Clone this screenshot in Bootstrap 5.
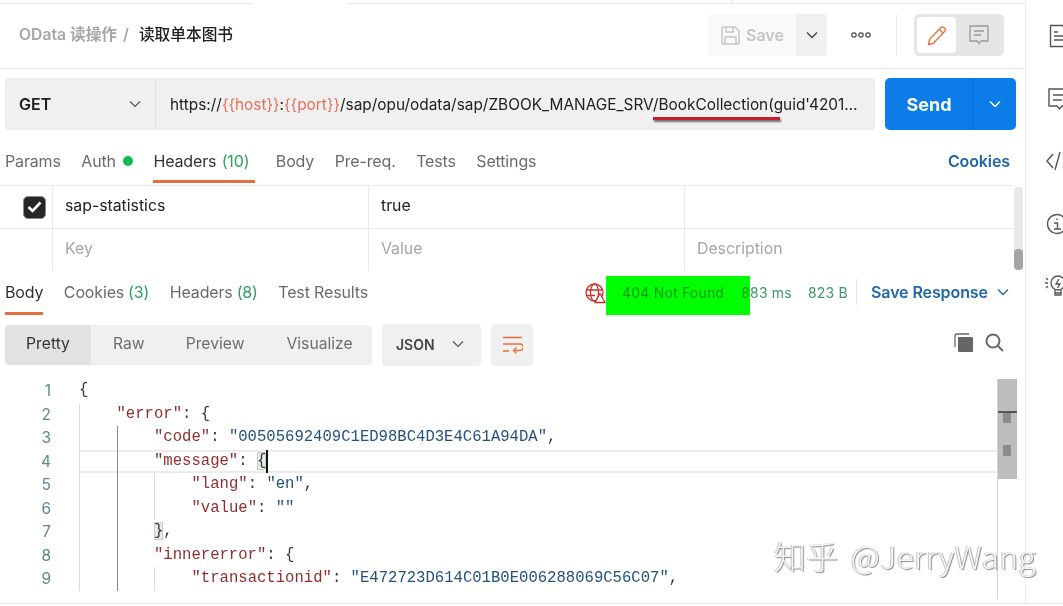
<!DOCTYPE html>
<html lang="zh"><head><meta charset="utf-8"><title>Postman</title>
<link href="https://cdn.jsdelivr.net/npm/bootstrap@5.3.0/dist/css/bootstrap.min.css" rel="stylesheet">
<style>
html,body{margin:0;height:606px;overflow:hidden;background:#fff}
body{font-family:Inter,"Noto Sans CJK SC",sans-serif;font-size:16px;color:#212121;width:1063px}
.shell{height:604px;border-bottom:1px solid #e8e8e8}
.main-col{width:1026px;border-right:1px solid #ececec;height:100%;position:relative}
.side-col{width:37px;overflow:hidden;height:100%;padding-top:24px;padding-left:19px}
.side-col svg{display:block;flex:none;margin-bottom:38.500px;width:24px;height:24px;color:#555}
.strip{height:4px}
.strip>div{border-bottom:1px solid #e6e6e6}
.strip .s1{width:252px}.strip .s2{width:96px;border-bottom-color:transparent}.strip .s3{width:384px;border-right:1px solid #e6e6e6}.strip .s4{flex:1}
.topbar{height:65px;border-bottom:1px solid #e8e8e8;padding:0 21px 2px 19px}
.crumb{font-size:15.700px;font-weight:600;color:#a6a6a6}
.crumb b{font-weight:500;color:#212121}
.crumb i{font-style:normal;margin:0 6px 0 2px}
.savebtn{width:87px;height:42px;background:#f9f9f9;border-radius:4px 0 0 4px;color:#c4c4c4;font-weight:600;padding-left:12px;gap:5px}
.savecaret{width:31px;height:42px;margin-left:1px;background:#f0f0f0;border-radius:0 4px 4px 0;color:#444}
.dots{width:69px;height:42px;color:#444;padding-right:2px}
.vline{width:1px;height:42px;background:#ededed}
.toggle{width:90px;height:42px;margin-left:17px;background:#e6e6e6;border-radius:5px;padding:3px}
.toggle>span{width:40px;height:36px;background:#fff;border-radius:4px;color:#e5703f}
.toggle>em{width:46px;color:#999}
.reqrow{height:52px;margin:9px 9px 0 5px;gap:10px}
.urlbox{width:870px;background:#f0f0f0;border-radius:4px;position:relative;border:1px solid #ececec}
.method{width:150px;border-right:1px solid #e2e2e2;padding:0 14px 0 13px;font-weight:600;color:#212121}
.urltext{padding:1px 14px 0;flex:1;min-width:0;font-size:15.400px;white-space:nowrap;overflow:hidden}
.urltext span{color:#e5705a}
.mark-red{position:absolute;left:647px;top:38px;width:127px;height:3px;background:#c81e2c;box-shadow:1px 2px 2px rgba(0,0,0,.55)}
.sendbtn{width:131px;background:#0b7ce8;border-radius:5px;color:#fff;font-size:18px;font-weight:700}
.sendbtn>div:first-child{width:88px}
.sendbtn>div:last-child{flex:1;height:100%;border-left:1px solid #0a6fd0}
.tabset{padding:0 15px 0 5px;height:43px;margin-top:10px;color:#6b6b6b;font-size:16px;letter-spacing:-.15px;gap:20.500px}
.tabset>span{height:100%;display:flex;align-items:center;padding-top:2px;border-bottom:3px solid transparent;gap:7px}
.tabset>span.on{border-bottom-color:#e5703f;color:#333}
.reqtab-h{padding-right:6px}
.num{color:#2f9e5f}
.reqtab-h .num{margin-left:-6px}
.dotg{width:10px;height:10px;border-radius:50%;background:#0cbb52;display:inline-block}
.linkb{color:#1f67a8;font-weight:600;letter-spacing:-.1px}
.kvtable{margin:2px 12px 0 0;position:relative}
.kvrow{height:43px;border-top:1px solid #e8e8e8;font-size:15.800px}
.kvrow>.c1,.kvrow>.c2,.kvrow>.c3{padding-bottom:2px}
.kvrow:last-child{border-bottom:1px solid #e8e8e8;height:44px}
.kvrow:last-child>.c1,.kvrow:last-child>.c2,.kvrow:last-child>.c3{padding-bottom:6px}
.c0{width:53px;border-right:1px solid #e8e8e8;padding-right:6px}
.c1{width:316px;border-right:1px solid #e8e8e8;padding-left:12px}
.c2{width:316px;border-right:1px solid #e8e8e8;padding-left:12px}
.c3{flex:1;padding-left:12px}
.muted-k{color:#a6a6a6}
.chk{width:23px;height:23px;background:#262626;border-radius:5px;border:1px solid #888}
.kvscroll{position:absolute;right:-10px;top:2px;width:9px;height:83px;background:#e8e8e8;border-radius:4px}
.kvscroll>div{position:absolute;left:0;bottom:0;width:9px;height:21px;background:#a5a5a5;border-radius:4px}
.reshead{height:44px;padding:0 15px 0 5px;position:relative}
.reshead .tabset{margin:0;padding:0;height:100%}
.reshead .tabset>span{gap:4px;padding-top:1px}
.globe{flex:none}
.stat{font-size:14px;color:#3d9a66;letter-spacing:.2px;width:251px;padding-left:16px;padding-bottom:2px;flex:none}
.stat .s404{margin-right:17px}
.stat .sms{margin-right:16px}
.stat .vline{height:26px;background:#e6e6e6}
.savelink{margin-left:14px;gap:9px;width:139px;flex:none;padding-bottom:2px}
.savelink>span{white-space:nowrap}
.green-cover{position:absolute;left:606px;top:5px;width:144px;height:39px;background:#0f0;mix-blend-mode:multiply}
.tools{height:42px;margin-top:9px;padding:0 21px 0 5px}
.seg{width:367px;height:40px;background:#f0f0f0;border-radius:4px;color:#6e6e6e;overflow:hidden;font-size:15.700px}
.seg>span{display:flex;align-items:center;height:100%;padding-bottom:2px}
.seg .pick{width:86px;background:#e2e2e2;color:#333;justify-content:center}
.pad-raw{margin-left:22px}.pad-prev{margin-left:41px}.pad-vis{margin-left:42px}
.jsonsel{width:99px;height:42px;margin-left:10px;background:#f0f0f0;border-radius:4px;font-size:14px;font-weight:600;color:#444;padding:0 17px 2px 14px}
.wrapb{width:42px;height:42px;margin-left:10px;background:#f0f0f0;border-radius:4px;color:#e5703f}
.resp-icons{gap:12px;margin-bottom:6px}
.editor{margin-top:13px;height:220px;padding-right:9px}
.gutter{width:79px;flex:none;padding-right:28px;text-align:right;color:#5f8a90}
.gutter div,.cl{height:23.500px;line-height:23.500px;font-family:"Liberation Mono",monospace;font-size:15.600px}
.gutter div{font-family:Inter,sans-serif;font-size:15.500px}
.code{flex:1;min-width:0;overflow:hidden}
.cl{display:flex;white-space:pre;color:#3a3a3a}
.cl.act{box-shadow:inset 0 2px 0 #ececec,inset 0 -2px 0 #ececec}
.g{width:37.500px;flex:none;border-left:1px solid #dcdcdc}
.g.dk{border-left-color:#8a8a8a}
.k{color:#8f2f2f}.s{color:#24527f}
.br{background:#e6ece6;box-shadow:inset 0 0 0 1px #c6cfc6}
.caret{display:inline-block;width:2px;height:23px;background:#111;vertical-align:top}
.ruler{width:19px;flex:none;border-left:1px solid #d4d4d4;position:relative}
.thumb{position:absolute;left:0;top:0;width:19px;height:100px;background:#bdbdbd}
.thumb i{position:absolute;display:block}
.tline{left:0;top:32px;width:19px;height:2px;background:#555}
.tm1{left:5px;top:34px;width:8px;height:10px;background:#8c8c8c}
.tm2{left:5px;top:66px;width:8px;height:11px;background:#8c8c8c}
.wm{position:absolute;left:774px;top:533px;font-size:32px;line-height:44px;font-family:"Noto Sans CJK SC","DejaVu Sans",sans-serif;font-weight:300;color:#f4f4f4;text-shadow:1px 1px 1px #8a8a8a,-1px 0 0 #c8c8c8;white-space:nowrap;letter-spacing:.2px;word-spacing:5px}
.ml4{margin-left:4px}.ml3{margin-left:3px}.ml1{margin-left:1px}.ml2{margin-left:2px}
</style></head><body>
<div class="shell d-flex">
<div class="main-col">
 <div class="strip d-flex"><div class="s1"></div><div class="s2"></div><div class="s3"></div><div class="s4"></div></div>
 <div class="topbar d-flex align-items-center">
  <div class="crumb flex-grow-1">OData 读操作<i> / </i><b>读取单本图书</b></div>
  <div class="savebtn d-flex align-items-center"><svg width="21" height="21" viewBox="0 0 21 21" fill="none" stroke="#c4c4c4" stroke-width="1.4"><path d="M2 3a1 1 0 0 1 1-1h12l4 4v12a1 1 0 0 1-1 1H3a1 1 0 0 1-1-1z"/><path d="M6 2v5h7V2M5 19v-7h11v7"/></svg>Save</div>
  <div class="savecaret d-flex align-items-center justify-content-center"><svg width="12" height="8" viewBox="0 0 12 8" fill="none" stroke="currentColor" stroke-width="1.3"><path d="M1 1.500l5 5 5-5"/></svg></div>
  <div class="dots d-flex align-items-center justify-content-center"><svg width="20" height="6" viewBox="0 0 20 6" fill="none" stroke="currentColor" stroke-width="1.200"><circle cx="3" cy="3" r="2.200"/><circle cx="10" cy="3" r="2.200"/><circle cx="17" cy="3" r="2.200"/></svg></div>
  <div class="vline"></div>
  <div class="toggle d-flex align-items-center"><span class="d-flex align-items-center justify-content-center"><svg width="20" height="21" viewBox="0 0 20 21" fill="none" stroke="currentColor" stroke-width="1.300"><path d="M1.500 19.500l1-5L14 2.500a2 2 0 0 1 3 0l.8.8a2 2 0 0 1 0 3L6.300 18.300z"/><path d="M12.500 4.500l3.500 3.500"/></svg></span><em class="d-flex align-items-center justify-content-center"><svg width="20" height="20" viewBox="0 0 20 20" fill="none" stroke="currentColor" stroke-width="1.300"><path d="M1 1h18v15h-7l-2 2.500L8 16H1z"/><path d="M5 6h10M5 10h7"/></svg></em></div>
 </div>
 <div class="reqrow d-flex">
  <div class="urlbox d-flex align-items-center">
   <div class="method h-100 d-flex align-items-center justify-content-between"><span>GET</span><svg width="12" height="8" viewBox="0 0 12 8" fill="none" stroke="#555" stroke-width="1.200"><path d="M1 1.500l5 5 5-5"/></svg></div>
   <div class="urltext">https://<span>{{host}}</span>:<span>{{port}}</span>/sap/opu/odata/sap/ZBOOK_MANAGE_SRV/BookCollection(guid'4201…</div>
   <div class="mark-red"></div>
  </div>
  <div class="sendbtn d-flex align-items-center"><div class="text-center">Send</div><div class="d-flex align-items-center justify-content-center"><svg width="12" height="8" viewBox="0 0 12 8" fill="none" stroke="#fff" stroke-width="1.500"><path d="M1 1.500l5 5 5-5"/></svg></div></div>
 </div>
 <div class="tabset d-flex align-items-center">
  <span>Params</span><span>Auth<i class="dotg"></i></span><span class="on reqtab-h">Headers&nbsp;<em class="num fst-normal">(10)</em></span><span>Body</span><span>Pre-req.</span><span>Tests</span><span>Settings</span><span class="linkb ms-auto">Cookies</span>
 </div>
 <div class="kvtable">
  <div class="kvrow d-flex align-items-center"><div class="c0 h-100 d-flex align-items-center justify-content-end"><div class="chk d-flex align-items-center justify-content-center"><svg width="15" height="12" viewBox="0 0 15 12" fill="none" stroke="#fff" stroke-width="2.600"><path d="M1.500 6l4 4 8-8.500"/></svg></div></div><div class="c1 h-100 d-flex align-items-center">sap-statistics</div><div class="c2 h-100 d-flex align-items-center">true</div><div class="c3 h-100"></div></div>
  <div class="kvrow d-flex align-items-center muted-k"><div class="c0 h-100"></div><div class="c1 h-100 d-flex align-items-center">Key</div><div class="c2 h-100 d-flex align-items-center">Value</div><div class="c3 h-100 d-flex align-items-center">Description</div></div>
  <div class="kvscroll"><div></div></div>
 </div>
 <div class="reshead d-flex align-items-center">
  <div class="tabset d-flex align-items-center flex-grow-1"><span class="on">Body</span><span>Cookies<em class="num fst-normal">(3)</em></span><span>Headers<em class="num fst-normal">(8)</em></span><span>Test Results</span></div>
  <svg width="21" height="21" viewBox="0 0 21 21" fill="none" stroke="#c9302c" stroke-width="1.300" class="globe"><circle cx="9.500" cy="9.500" r="8.500"/><ellipse cx="9.500" cy="9.500" rx="4" ry="8.500"/><path d="M1 7h17M1 12.500h9"/><path d="M15 10.500l5 9h-10z" fill="#fff"/></svg>
  <div class="stat d-flex align-items-center"><span class="s404">404 Not Found</span><span class="sms">883 ms</span><span>823 B</span><span class="vline ms-auto"></span></div>
  <div class="linkb savelink d-flex align-items-center"><span>Save Response</span><svg width="12" height="8" viewBox="0 0 12 8" fill="none" stroke="#1f67a8" stroke-width="1.400"><path d="M1 1.500l5 5 5-5"/></svg></div>
  <div class="green-cover"></div>
 </div>
 <div class="tools d-flex align-items-center">
  <div class="seg d-flex"><span class="pick">Pretty</span><span class="pad-raw">Raw</span><span class="pad-prev">Preview</span><span class="pad-vis">Visualize</span></div>
  <div class="jsonsel d-flex align-items-center justify-content-between"><span>JSON</span><svg width="12" height="8" viewBox="0 0 12 8" fill="none" stroke="#555" stroke-width="1.200"><path d="M1 1.500l5 5 5-5"/></svg></div>
  <div class="wrapb d-flex align-items-center justify-content-center"><svg width="21" height="18" viewBox="0 0 21 18" fill="none" stroke="currentColor" stroke-width="1.300"><path d="M1 1.500h19M1 8h17a2.500 2.500 0 0 1 0 6.500h-6M14.500 11.500l-3 3 3 3M1 15h6"/></svg></div>
  <div class="ms-auto d-flex align-items-center resp-icons"><svg width="19" height="19" viewBox="0 0 19 19"><path d="M1 14V3a2 2 0 0 1 2-2h12" fill="none" stroke="#666" stroke-width="1.300"/><rect x="4" y="4" width="15" height="15" rx="1" fill="#666"/></svg><svg width="19" height="19" viewBox="0 0 19 19" fill="none" stroke="#666" stroke-width="2"><circle cx="8" cy="8" r="6.500"/><path d="M13 13l5 5"/></svg></div>
 </div>
 <div class="editor d-flex">
  <div class="gutter"><div>1</div><div>2</div><div>3</div><div>4</div><div>5</div><div>6</div><div>7</div><div>8</div><div>9</div></div>
  <div class="code">
   <div class="cl">{</div>
   <div class="cl"><i class="g"></i><span><span class="k">"error"</span>: {</span></div>
   <div class="cl"><i class="g"></i><i class="g dk"></i><span><span class="k">"code"</span>: <span class="s">"00505692409C1ED98BC4D3E4C61A94DA"</span>,</span></div>
   <div class="cl act"><i class="g"></i><i class="g dk"></i><span><span class="k">"message"</span>: <span class="br">{</span><span class="caret"></span></span></div>
   <div class="cl"><i class="g"></i><i class="g dk"></i><i class="g"></i><span><span class="k">"lang"</span>: <span class="s">"en"</span>,</span></div>
   <div class="cl"><i class="g"></i><i class="g dk"></i><i class="g"></i><span><span class="k">"value"</span>: <span class="s">""</span></span></div>
   <div class="cl"><i class="g"></i><i class="g dk"></i><span><span class="br">}</span>,</span></div>
   <div class="cl"><i class="g"></i><i class="g dk"></i><span><span class="k">"innererror"</span>: {</span></div>
   <div class="cl"><i class="g"></i><i class="g dk"></i><i class="g"></i><span><span class="k">"transactionid"</span>: <span class="s">"E472723D614C01B0E006288069C56C07"</span>,</span></div>
  </div>
  <div class="ruler"><div class="thumb"><i class="tline"></i><i class="tm1"></i><i class="tm2"></i></div></div>
 </div>
</div>
<div class="side-col d-flex flex-column">
 <svg class="ml4" viewBox="0 0 24 24" fill="none" stroke="currentColor" stroke-width="1.400"><path d="M1.500 1.500h12l6 6V22.500h-18z"/><path d="M5 8h4M5 12h10M5 16h10"/></svg>
 <svg class="ml3" viewBox="0 0 24 24" fill="none" stroke="currentColor" stroke-width="1.400"><path d="M1 2h22v17h-9l-2.500 3L9 19H1z"/><path d="M5 8h14M5 13h9"/></svg>
 <svg class="ml1" viewBox="0 0 24 24" fill="none" stroke="currentColor" stroke-width="1.400"><path d="M7 5l-6 7 6 7M14 3L9 21M17 5l6 7-6 7"/></svg>
 <svg class="ml2" viewBox="0 0 24 24" fill="none" stroke="currentColor" stroke-width="1.400"><circle cx="10" cy="12" r="9.500"/><path d="M10 6.500v1.500M7 11h3.500v6M7 17h7"/></svg>
 <svg viewBox="0 0 24 24" fill="none" stroke="currentColor" stroke-width="1.300"><circle cx="13" cy="9" r="7"/><path d="M10 16v5h6v-5M10 19h6M14 5l-3 5h4l-2.500 4M1 4l2 2M0 9h3M1 14l2-2"/></svg>
</div>
</div>
<div class="wm">知乎 @JerryWang</div>
<script src="https://cdn.jsdelivr.net/npm/bootstrap@5.3.0/dist/js/bootstrap.bundle.min.js"></script>
</body></html>
